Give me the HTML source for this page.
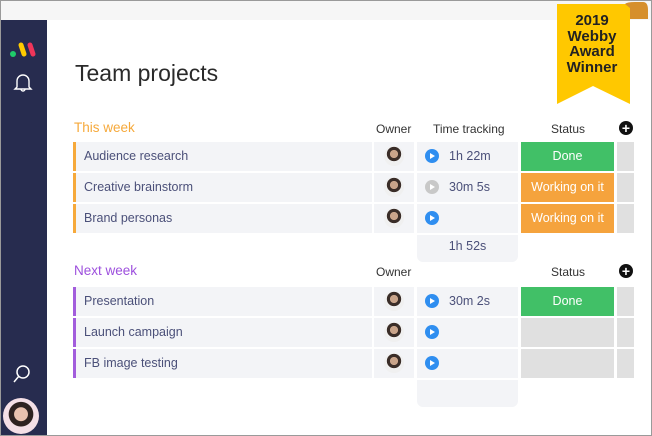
<!DOCTYPE html>
<html><head><style>
*{margin:0;padding:0;box-sizing:border-box}
body{width:652px;height:436px;overflow:hidden;background:#fff;font-family:"Liberation Sans",sans-serif;position:relative}
.frame{position:absolute;left:0;top:0;width:652px;height:436px;border:1px solid #9a9a9a;}
.top{position:absolute;left:1px;top:1px;width:650px;height:19px;background:#f6f6f6}
.side{position:absolute;left:1px;top:20px;width:46px;height:415px;background:#272c4f}
.a{position:absolute}
.name{position:absolute;left:73px;width:299px;height:29px;background:#f3f4f7;color:#4b5079;font-size:12.5px;line-height:29px;padding-left:11px}
.name:before{content:"";position:absolute;left:0;top:0;width:3px;height:29px;background:var(--c)}
.own{position:absolute;left:374px;width:40px;height:29px;background:#f3f4f7}
.tim{position:absolute;left:417px;width:101px;height:29px;background:#f3f4f7;color:#4b5079;font-size:12.5px;line-height:29px;padding-left:32px}
.st{position:absolute;left:521px;width:93px;height:29px;background:#e0e0e0;color:#fff;font-size:12.5px;line-height:29px;text-align:center}
.ex{position:absolute;left:617px;width:17px;height:29px;background:#e0e0e0}
.play{position:absolute;left:425px;width:14px;height:14px;border-radius:50%;background:#2f8ef0}
.play:after{content:"";position:absolute;left:5px;top:4px;border-left:5px solid #fff;border-top:3px solid transparent;border-bottom:3px solid transparent}
.av{position:absolute;left:384px;width:20px;height:20px;border-radius:50%;background:radial-gradient(circle at 50% 40%,#c9a48a 0 25%,#3a2d28 27% 45%,#f0f0f0 47%)}
.hd{position:absolute;font-size:12px;color:#333}
</style></head><body>
<div class="top"></div>
<div class="side"></div>
<div class="frame"></div>
<svg class="a" style="left:9px;top:40px" width="28" height="18"><circle cx="4" cy="14" r="3" fill="#1fcc6a"/><line x1="12" y1="5" x2="15" y2="14" stroke="#ffcb00" stroke-width="5" stroke-linecap="round"/><line x1="21" y1="5" x2="24" y2="14" stroke="#f0355a" stroke-width="5" stroke-linecap="round"/></svg>
<svg class="a" style="left:13px;top:72px" width="20" height="20" fill="none" stroke="#fff" stroke-width="1.4"><path d="M4 15V9a6 6 0 0112 0v6l2 2H2z"/><path d="M8 17a2 2 0 004 0"/></svg>
<svg class="a" style="left:12px;top:364px" width="20" height="20" fill="none" stroke="#fff" stroke-width="1.5"><circle cx="11" cy="8" r="6"/><line x1="7" y1="12" x2="2" y2="18"/></svg>
<div class="a" style="left:3px;top:398px;width:36px;height:36px;border-radius:50%;background:radial-gradient(circle at 50% 45%,#e9c1ae 0 25%,#2e2220 27% 45%,#f4dfe6 47%)"></div>
<div class="a" style="left:75px;top:60px;font-size:23px;color:#2a2a2a">Team projects</div>
<svg class="a" style="left:555px;top:0" width="95" height="106"><path d="M2 4H75V104L38 86L2 104Z" fill="#ffc800"/><path d="M70 4Q72 2 80 2H88Q93 2 93 10V19H75V8Z" fill="#d68f2c"/></svg>
<div class="a" style="left:555px;top:13px;width:74px;text-align:center;font-size:15px;font-weight:bold;line-height:15.5px;color:#222">2019<br>Webby<br>Award<br>Winner</div>
<div class="a" style="left:74px;top:120px;font-size:13.5px;color:#f6a93b">This week</div>
<div class="hd" style="left:376px;top:122px">Owner</div>
<div class="hd" style="left:433px;top:122px">Time tracking</div>
<div class="hd" style="left:551px;top:122px">Status</div>
<div class="a" style="left:619px;top:121px;width:14px;height:14px;border-radius:50%;background:#111;color:#fff;font-size:14px;line-height:14px;text-align:center;font-weight:bold">+</div>
<div class="name" style="top:142px;--c:#f6a93b">Audience research</div><div class="own" style="top:142px"></div><div class="av" style="top:146px"></div><div class="tim" style="top:142px">1h 22m</div><div class="play" style="top:149px"></div><div class="st" style="top:142px;background:#41c067">Done</div><div class="ex" style="top:142px"></div>
<div class="name" style="top:173px;--c:#f6a93b">Creative brainstorm</div><div class="own" style="top:173px"></div><div class="av" style="top:177px"></div><div class="tim" style="top:173px">30m 5s</div><div class="play" style="top:180px;background:#c8c8c8"></div><div class="st" style="top:173px;background:#f5a33d">Working on it</div><div class="ex" style="top:173px"></div>
<div class="name" style="top:204px;--c:#f6a93b">Brand personas</div><div class="own" style="top:204px"></div><div class="av" style="top:208px"></div><div class="tim" style="top:204px"></div><div class="play" style="top:211px"></div><div class="st" style="top:204px;background:#f5a33d">Working on it</div><div class="ex" style="top:204px"></div>
<div class="a" style="left:417px;top:235px;width:101px;height:27px;background:#f3f4f7;border-radius:0 0 6px 6px;color:#4b5079;font-size:12.5px;line-height:23px;text-align:center">1h 52s</div>
<div class="a" style="left:74px;top:263px;font-size:13.5px;color:#9d50dd">Next week</div>
<div class="hd" style="left:376px;top:265px">Owner</div>
<div class="hd" style="left:551px;top:265px">Status</div>
<div class="a" style="left:619px;top:264px;width:14px;height:14px;border-radius:50%;background:#111;color:#fff;font-size:14px;line-height:14px;text-align:center;font-weight:bold">+</div>
<div class="name" style="top:287px;--c:#a25ddc">Presentation</div><div class="own" style="top:287px"></div><div class="av" style="top:291px"></div><div class="tim" style="top:287px">30m 2s</div><div class="play" style="top:294px"></div><div class="st" style="top:287px;background:#41c067">Done</div><div class="ex" style="top:287px"></div>
<div class="name" style="top:318px;--c:#a25ddc">Launch campaign</div><div class="own" style="top:318px"></div><div class="av" style="top:322px"></div><div class="tim" style="top:318px"></div><div class="play" style="top:325px"></div><div class="st" style="top:318px"></div><div class="ex" style="top:318px"></div>
<div class="name" style="top:349px;--c:#a25ddc">FB image testing</div><div class="own" style="top:349px"></div><div class="av" style="top:353px"></div><div class="tim" style="top:349px"></div><div class="play" style="top:356px"></div><div class="st" style="top:349px"></div><div class="ex" style="top:349px"></div>
<div class="a" style="left:417px;top:380px;width:101px;height:27px;background:#f3f4f7;border-radius:0 0 6px 6px"></div>
</body></html>
